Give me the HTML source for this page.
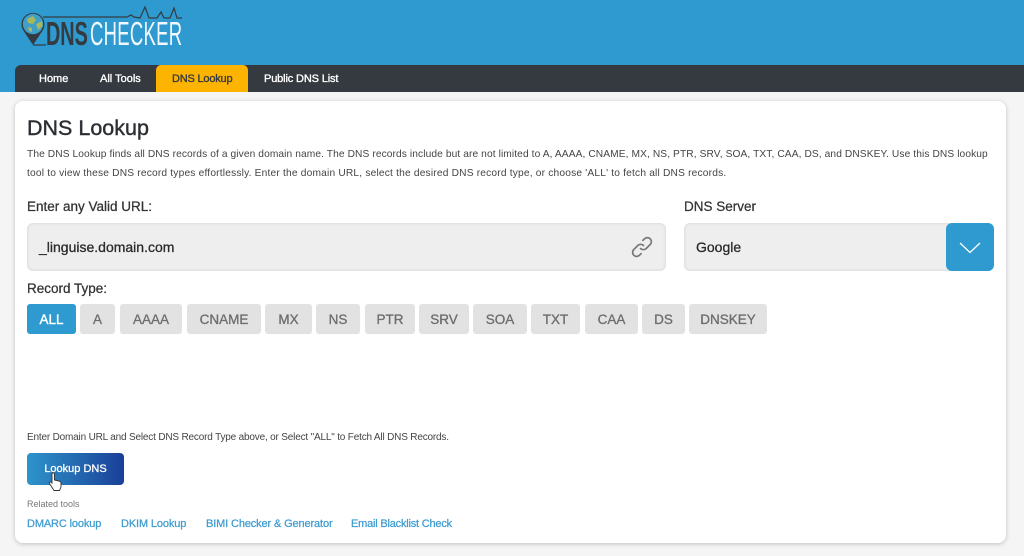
<!DOCTYPE html>
<html><head><meta charset="utf-8"><style>
html,body{margin:0;padding:0}
body{width:1024px;height:556px;overflow:hidden;position:relative;background:#f5f5f5;font-family:"Liberation Sans",sans-serif;color:#333}
.a{position:absolute;white-space:nowrap}
.hdr{left:0;top:0;width:1024px;height:92px;background:#2e9ad0}
.nav{left:15px;top:65px;width:1009px;height:27px;background:#343a40;border-radius:6px 0 0 0}
.n{top:65px;height:27px;line-height:28px;font-size:11px;color:#fff;-webkit-text-stroke:.35px #fff}
.card{left:15px;top:101px;width:991px;height:442px;background:#fff;border-radius:8px;box-shadow:0 1px 5px rgba(0,0,0,.22)}
.in{background:#eee;border-radius:6px;box-shadow:inset 0 0 3px rgba(0,0,0,.12);top:223px;height:48px}
.b{top:304px;height:30px;line-height:31px;background:#e2e2e2;border-radius:3px;color:#6d6d6d;font-size:13.5px;-webkit-text-stroke:.3px #6d6d6d;text-align:center}
.l{top:517px;font-size:11px;color:#3d9ccf;-webkit-text-stroke:.25px #3d9ccf;line-height:14px;letter-spacing:-.13px}
.lab{font-size:13.5px;line-height:18px;color:#333;-webkit-text-stroke:.25px #333}
.t{font-size:14px;line-height:18px;color:#2a2a2a;-webkit-text-stroke:.3px #2a2a2a}
</style></head><body>
<div class="a hdr"></div>
<svg class="a" style="left:20px;top:5px" width="170" height="48" viewBox="20 5 170 48">
<path d="M33 45 L23 30 A11.5 11.5 0 1 1 43 30 Z" fill="#343a40"/>
<circle cx="33" cy="24" r="10.2" fill="#3f9fc9"/>
<path d="M27 19 l6 -3 l3 4 l-3 4 l-5 -1z M36 24 l6 -3 l0.5 5 l-4.5 4z M28 27 l4 1 l0 4 l-3 -1z" fill="#a9b85a"/>
<path d="M33 45 H46 M43 17 H127 l4 -2 l3 2 l6 1 l5 -11 l4 11 h8 l4 -6 l3 6 h6 l4 -10 l3 10 h5" fill="none" stroke="#343a40" stroke-width="1.2"/>
</svg>
<div class="a" style="left:46px;top:16px;font-size:33px;line-height:36px;color:#343a40;font-weight:bold;transform-origin:0 0;transform:scaleX(.6)">DNS</div>
<div class="a" style="left:90px;top:16px;font-size:33px;line-height:36px;color:#f2f8fc;transform-origin:0 0;transform:scaleX(.56);letter-spacing:.5px">CHECKER</div>
<div class="a nav"></div>
<div class="a" style="left:156px;top:65px;width:92px;height:27px;background:#fdb400;border-radius:5px 5px 0 0"></div>
<div class="a n" style="left:39px">Home</div>
<div class="a n" style="left:100px">All Tools</div>
<div class="a n" style="left:172px;color:#343a40;-webkit-text-stroke:.35px #343a40;letter-spacing:-.2px">DNS Lookup</div>
<div class="a n" style="left:264px;letter-spacing:-.14px">Public DNS List</div>
<div class="a card"></div>
<div class="a" style="left:27px;top:114px;font-size:21.5px;line-height:28px;color:#2b2f33;-webkit-text-stroke:.4px #2b2f33">DNS Lookup</div>
<div class="a" style="left:27px;top:148px;font-size:10.2px;line-height:14px;color:#444;letter-spacing:.1px">The DNS Lookup finds all DNS records of a given domain name. The DNS records include but are not limited to A, AAAA, CNAME, MX, NS, PTR, SRV, SOA, TXT, CAA, DS, and DNSKEY. Use this DNS lookup</div>
<div class="a" style="left:27px;top:167px;font-size:10.2px;line-height:14px;color:#444;letter-spacing:.19px">tool to view these DNS record types effortlessly. Enter the domain URL, select the desired DNS record type, or choose 'ALL' to fetch all DNS records.</div>
<div class="a lab" style="left:27px;top:198px">Enter any Valid URL:</div>
<div class="a lab" style="left:684px;top:198px">DNS Server</div>
<div class="a in" style="left:27px;width:639px"></div>
<div class="a t" style="left:39px;top:238px">_linguise.domain.com</div>
<svg class="a" style="left:630px;top:235px" width="24" height="24" viewBox="0 0 24 24" fill="none" stroke="#777" stroke-width="1.7" stroke-linecap="round"><path d="M10.5 13.5 a4 4 0 0 0 5.7 0 l4 -4 a4 4 0 0 0 -5.7 -5.7 l-1.6 1.6"/><path d="M13.5 10.5 a4 4 0 0 0 -5.7 0 l-4 4 a4 4 0 0 0 5.7 5.7 l1.6 -1.6"/></svg>
<div class="a in" style="left:684px;width:310px"></div>
<div class="a t" style="left:696px;top:238px">Google</div>
<div class="a" style="left:946px;top:223px;width:48px;height:48px;background:#2e9ad0;border-radius:6px"></div>
<svg class="a" style="left:958px;top:240px" width="24" height="14" viewBox="0 0 24 14" fill="none" stroke="#fff" stroke-width="1.3"><path d="M2 3 L12 12.5 L22 3"/></svg>
<div class="a lab" style="left:27px;top:280px">Record Type:</div>
<div class="a b" style="left:27px;width:49px;background:#2e9ad0;color:#fff;-webkit-text-stroke:.4px #fff">ALL</div>
<div class="a b" style="left:80px;width:35px">A</div>
<div class="a b" style="left:120px;width:62px">AAAA</div>
<div class="a b" style="left:187px;width:74px">CNAME</div>
<div class="a b" style="left:265px;width:47px">MX</div>
<div class="a b" style="left:316px;width:44px">NS</div>
<div class="a b" style="left:365px;width:50px">PTR</div>
<div class="a b" style="left:419px;width:50px">SRV</div>
<div class="a b" style="left:473px;width:54px">SOA</div>
<div class="a b" style="left:531px;width:49px">TXT</div>
<div class="a b" style="left:585px;width:53px">CAA</div>
<div class="a b" style="left:642px;width:43px">DS</div>
<div class="a b" style="left:689px;width:78px">DNSKEY</div>
<div class="a" style="left:27px;top:431px;font-size:10px;line-height:14px;color:#444;letter-spacing:-.18px">Enter Domain URL and Select DNS Record Type above, or Select "ALL" to Fetch All DNS Records.</div>
<div class="a" style="left:27px;top:453px;width:97px;height:32px;line-height:33px;border-radius:4px;background:linear-gradient(90deg,#2e94cb,#1a3f98);color:#fff;font-size:11px;-webkit-text-stroke:.3px #fff;text-align:center">Lookup DNS</div>
<svg class="a" style="left:48px;top:472px" width="16" height="20" viewBox="0 0 16 20"><path d="M4 2 a1.2 1.2 0 0 1 2.4 0 V8 l5 1.2 a2 2 0 0 1 1.6 2 V15 l-1.5 3.5 H6 L1.5 11.5 a1.1 1.1 0 0 1 1.8 -1.2 L4 11 Z" fill="#fff" stroke="#333" stroke-width=".9"/></svg>
<div class="a" style="left:27px;top:498px;font-size:9px;line-height:12px;color:#777">Related tools</div>
<div class="a l" style="left:27px">DMARC lookup</div>
<div class="a l" style="left:121px">DKIM Lookup</div>
<div class="a l" style="left:206px">BIMI Checker &amp; Generator</div>
<div class="a l" style="left:351px;letter-spacing:-.2px">Email Blacklist Check</div>
</body></html>
